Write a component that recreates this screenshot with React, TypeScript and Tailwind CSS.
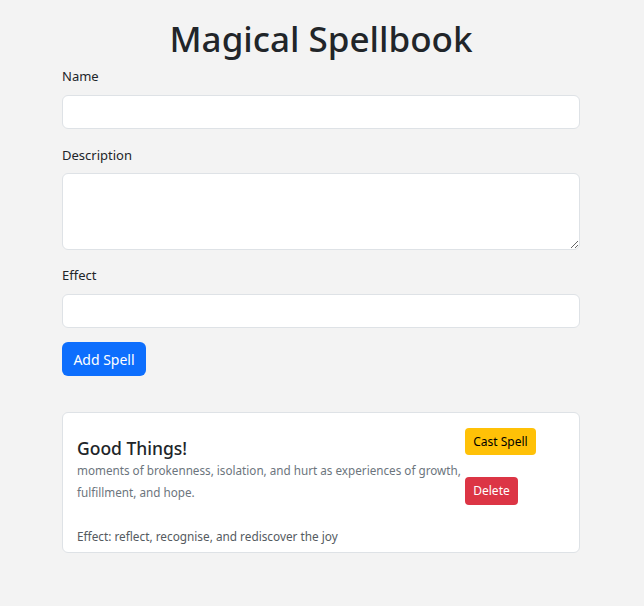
import React from "react";

export default function App() {
  return (
    <div
      className="min-h-[606px] bg-[#f3f3f3] text-[#212529]"
      style={{ fontFamily: '"Noto Sans", "Open Sans", sans-serif' }}
    >
      <div className="ml-[62px] w-[518px] pt-[15px]">
        <h1 className="text-center text-[35px] font-medium leading-[48px]">Magical Spellbook</h1>
        <div className="mt-[3px]">
          <label className="block text-[13px] leading-[21px]">Name</label>
          <input
            type="text"
            className="mt-[8px] block h-[34px] w-full rounded-[6px] border border-[#dee2e6] bg-white px-3 outline-none"
          />
        </div>
        <div className="mt-[16px]">
          <label className="block text-[13px] leading-[21px]">Description</label>
          <textarea className="mt-[7px] block h-[77px] w-full rounded-[6px] border border-[#dee2e6] bg-white px-3 outline-none" />
        </div>
        <div className="mt-[15px]">
          <label className="block text-[13px] leading-[21px]">Effect</label>
          <input
            type="text"
            className="mt-[8px] block h-[34px] w-full rounded-[6px] border border-[#dee2e6] bg-white px-3 outline-none"
          />
        </div>
        <button className="mt-[14px] h-[34px] w-[84px] rounded-[6px] bg-[#0d6efd] text-[14px] text-white">
          Add Spell
        </button>
        <div className="mt-[36px] flex rounded-[6px] border border-[#dee2e6] bg-white pl-[14px] pr-[15px] pt-[15px] pb-[5px]">
          <div className="w-[388px]">
            <h3 className="mt-[10px] text-[17.5px] font-medium leading-[21px] text-[#212529]">Good Things!</h3>
            <p className="text-[11.7px] leading-[22px] text-[#6c757d]">
              moments of brokenness, isolation, and hurt as experiences of growth, fulfillment, and hope.
            </p>
            <p className="mt-[22px] text-[11.8px] leading-[22px] text-[#555b61]">
              Effect: reflect, recognise, and rediscover the joy
            </p>
          </div>
          <div className="flex flex-col items-start">
            <button className="h-[27px] w-[71px] rounded-[4px] bg-[#ffc107] text-[12px] text-black">
              Cast Spell
            </button>
            <button className="mt-[22px] h-[28px] w-[53px] rounded-[4px] bg-[#dc3545] text-[12px] text-white">
              Delete
            </button>
          </div>
        </div>
      </div>
    </div>
  );
}
